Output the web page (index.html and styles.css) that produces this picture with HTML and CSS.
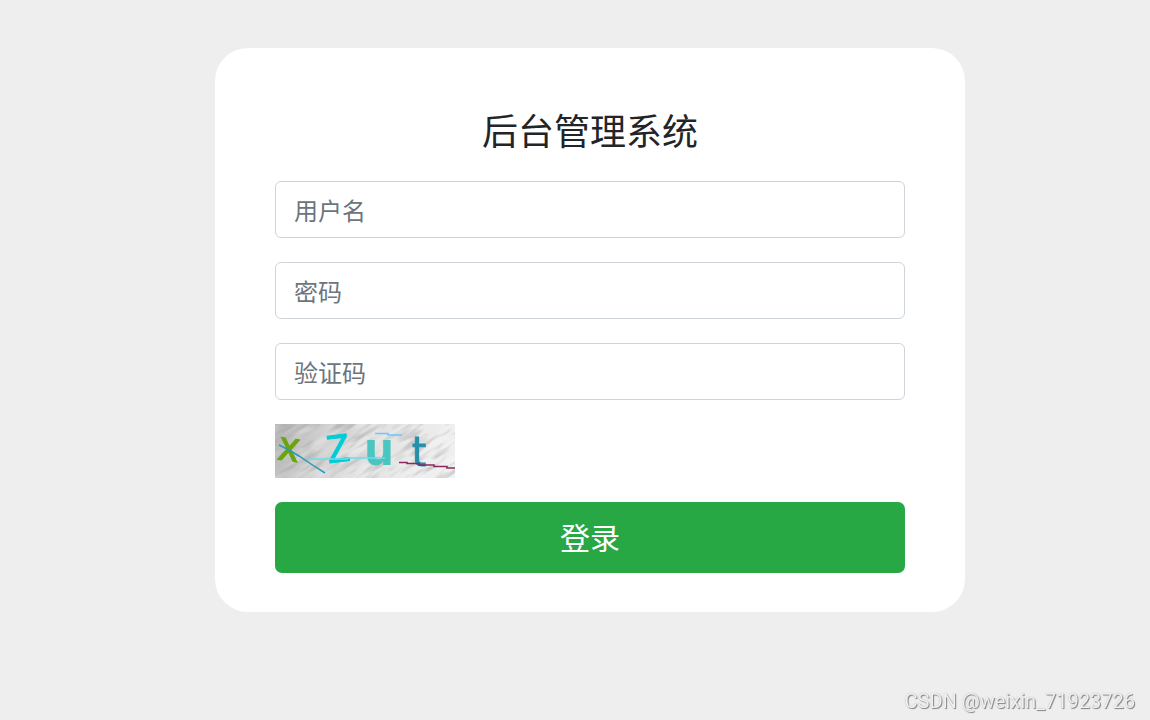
FILE: index.html
```html
<!DOCTYPE html>
<html lang="zh-CN">
<head>
<meta charset="utf-8">
<meta name="viewport" content="width=device-width, initial-scale=1">
<title>后台管理系统</title>
<link rel="stylesheet" href="styles.css">
</head>
<body>
<main class="page">
  <form class="card">
    <h1 class="title">后台管理系统</h1>
    <input class="field" type="text" name="username" placeholder="用户名" aria-label="用户名">
    <input class="field" type="password" name="password" placeholder="密码" aria-label="密码">
    <input class="field" type="text" name="captcha" placeholder="验证码" aria-label="验证码">
    <svg class="captcha" width="180" height="54" viewBox="0 0 180 54" role="img" aria-label="验证码图片">
      <defs>
        <linearGradient id="paper" x1="0" y1="0" x2="1" y2="0.15">
          <stop offset="0" stop-color="#b0b0b0"/>
          <stop offset="0.25" stop-color="#cccccc"/>
          <stop offset="0.55" stop-color="#e0e0e0"/>
          <stop offset="1" stop-color="#efefef"/>
        </linearGradient>
        <clipPath id="frame"><rect width="180" height="54"/></clipPath>
        <filter id="grain" x="0" y="0" width="1" height="1">
          <feTurbulence type="fractalNoise" baseFrequency="0.04 0.18" numOctaves="2" seed="8"/>
          <feColorMatrix type="matrix" values="0 0 0 0 0.4  0 0 0 0 0.4  0 0 0 0 0.4  3 0 0 0 -1.4"/>
        </filter>
        <filter id="grain-light" x="0" y="0" width="1" height="1">
          <feTurbulence type="fractalNoise" baseFrequency="0.03 0.14" numOctaves="2" seed="21"/>
          <feColorMatrix type="matrix" values="0 0 0 0 1  0 0 0 0 1  0 0 0 0 1  3 0 0 0 -1.3"/>
        </filter>
        <filter id="soft"><feGaussianBlur stdDeviation="0.5"/></filter>
      </defs>
      <rect width="180" height="54" fill="url(#paper)"/>
      <g clip-path="url(#frame)">
        <g transform="rotate(-32 90 27)">
          <rect x="-20" y="-60" width="220" height="170" filter="url(#grain-light)" opacity="0.3"/>
          <rect x="-20" y="-60" width="220" height="170" filter="url(#grain)" opacity="0.6"/>
        </g>
      </g>
      <g class="captcha-text" filter="url(#soft)">
        <text x="14" y="37" fill="#6ba510" font-size="41" stroke="#6ba510" stroke-width="1" transform="rotate(8 14 25)">x</text>
        <text x="63" y="38" fill="#04cdd6" font-size="37" stroke="#04cdd6" stroke-width="1" transform="rotate(-7 63 24)">Z</text>
        <text class="captcha-bold" x="104" y="41" fill="#4cc5bf" font-size="47">u</text>
        <text x="144" y="42" fill="#2590aa" font-size="40" stroke="#2590aa" stroke-width="1">t</text>
      </g>
      <g fill="none" stroke-width="1.5">
        <path d="M4 21L14 26L24 32L36 40L50 49" stroke="#269cbb"/>
        <path d="M34 35H72V34H110" stroke="#71dce8"/>
        <path d="M100 9.500H113V11H127" stroke="#70c5fa"/>
        <path d="M124 38.500H132V39.500H144V41H159V42.500H172V44H180" stroke="#8b285c"/>
      </g>
    </svg>
    <button class="submit" type="submit">登录</button>
  </form>
</main>
<div class="watermark">CSDN @weixin_71923726</div>
</body>
</html>
```
FILE: styles.css
```css
* {
  box-sizing: border-box;
}

body {
  margin: 0;
  min-height: 100vh;
  background: #eee;
  color: #212529;
  font-family: "Liberation Sans", "Noto Sans CJK SC", sans-serif;
}

.page {
  padding: 48px 0 48px 30px;
}

.card {
  display: flex;
  flex-direction: column;
  gap: 24px;
  max-width: 750px;
  margin: 0 auto;
  padding: 60px 60px 39px;
  border-radius: 33px;
  background: #fff;
}

.title {
  margin: 0;
  font-size: 36px;
  font-weight: 400;
  line-height: 49px;
  text-align: center;
}

.field {
  width: 100%;
  height: 57px;
  padding: 12px 18px 8px;
  border: 1px solid #ced4da;
  border-radius: 6px;
  background: #fff;
  color: #495057;
  font: inherit;
  font-size: 24px;
}

.field::placeholder {
  color: #6c757d;
  opacity: 1;
}

.captcha {
  display: block;
  overflow: visible;
}

.captcha-text {
  font-family: "DejaVu Sans Condensed", "DejaVu Sans", sans-serif;
  text-anchor: middle;
}

.captcha-bold {
  font-weight: 700;
}

.submit {
  width: 100%;
  padding: 13px 12px 11px;
  border: 0;
  border-radius: 7px;
  background: #28a745;
  color: #fff;
  font: inherit;
  font-size: 30px;
  line-height: 47px;
}

.watermark {
  position: fixed;
  right: 15px;
  bottom: 7px;
  color: #f0f0f0;
  font-family: Roboto, sans-serif;
  font-size: 20px;
  line-height: 24px;
  text-shadow: 1px 1px 1px #808080, 0 0 1px #aaa;
}
```
